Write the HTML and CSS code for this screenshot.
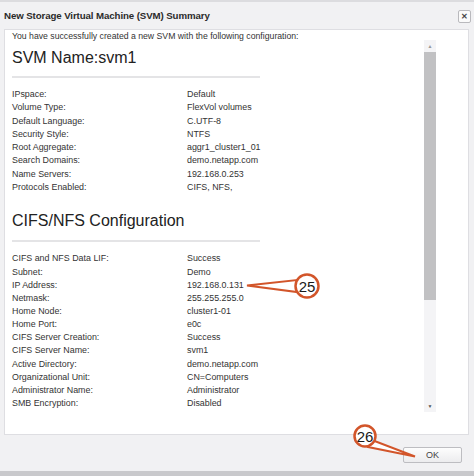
FILE: index.html
```html
<!DOCTYPE html>
<html>
<head>
<meta charset="utf-8">
<link rel="stylesheet" href="styles.css">
</head>
<body>
<div class="dialog">
  <div class="titlebar">
    <span class="title">New Storage Virtual Machine (SVM) Summary</span>
    <span class="close">&#x2715;</span>
  </div>
  <div class="panel">
    <div class="content">
      <p class="intro">You have successfully created a new SVM with the following configuration:</p>
      <h2 class="heading">SVM Name:svm1</h2>
      <div class="rows">
        <span>IPspace:</span><span>Default</span>
        <span>Volume Type:</span><span>FlexVol volumes</span>
        <span>Default Language:</span><span>C.UTF-8</span>
        <span>Security Style:</span><span>NTFS</span>
        <span>Root Aggregate:</span><span>aggr1_cluster1_01</span>
        <span>Search Domains:</span><span>demo.netapp.com</span>
        <span>Name Servers:</span><span>192.168.0.253</span>
        <span>Protocols Enabled:</span><span>CIFS, NFS,</span>
      </div>
      <h2 class="heading second">CIFS/NFS Configuration</h2>
      <div class="rows second-rows">
        <span>CIFS and NFS Data LIF:</span><span>Success</span>
        <span>Subnet:</span><span>Demo</span>
        <span>IP Address:</span><span>192.168.0.131</span>
        <span>Netmask:</span><span>255.255.255.0</span>
        <span>Home Node:</span><span>cluster1-01</span>
        <span>Home Port:</span><span>e0c</span>
        <span>CIFS Server Creation:</span><span>Success</span>
        <span>CIFS Server Name:</span><span>svm1</span>
        <span>Active Directory:</span><span>demo.netapp.com</span>
        <span>Organizational Unit:</span><span>CN=Computers</span>
        <span>Administrator Name:</span><span>Administrator</span>
        <span>SMB Encryption:</span><span>Disabled</span>
      </div>
    </div>
    <div class="scrollbar">
      <div class="arrow up">&#x25B2;</div>
      <div class="thumb"></div>
      <div class="track"></div>
      <div class="arrow down">&#x25BC;</div>
    </div>
  </div>
  <div class="footer">
    <button class="ok">OK</button>
  </div>
  <div class="bottomband"></div>
  <svg class="callouts" width="474" height="476" viewBox="0 0 474 476">
    <polygon points="247,285.5 297,280 297,292" fill="#fff" stroke="#d2552a" stroke-width="2" stroke-linejoin="miter"/>
    <circle cx="307" cy="286" r="11.5" fill="#fff" stroke="#d2552a" stroke-width="2.5"/>
    <text x="307" y="291.5" text-anchor="middle" class="calltext">25</text>
    <polygon points="415,456.5 372,440 368,447" fill="#fff" stroke="#d2552a" stroke-width="2" stroke-linejoin="miter"/>
    <circle cx="365" cy="436" r="10.5" fill="#fff" stroke="#d2552a" stroke-width="2.5"/>
    <text x="365" y="441.5" text-anchor="middle" class="calltext">26</text>
  </svg>
</div>
</body>
</html>
```
FILE: styles.css
```css
html, body {
  margin: 0;
  padding: 0;
}
body {
  width: 474px;
  height: 476px;
  overflow: hidden;
  background: #f1f1f3;
  font-family: "Liberation Sans", Arial, sans-serif;
  color: #333;
}
.dialog {
  position: relative;
  width: 474px;
  height: 476px;
  display: flex;
  flex-direction: column;
  border-top: 2px solid #dcdcdf;
  box-sizing: border-box;
}
.titlebar {
  height: 27px;
  display: flex;
  align-items: center;
  justify-content: space-between;
  padding: 0 3px 0 4px;
}
.title {
  font-weight: bold;
  font-size: 9.7px;
  color: #2a2a2a;
  letter-spacing: -0.1px;
}
.close {
  width: 11px;
  height: 11px;
  border: 1px solid #b9b9bd;
  border-radius: 2px;
  background: #fafafa;
  font-size: 8px;
  font-weight: bold;
  line-height: 11px;
  text-align: center;
  color: #444;
  margin-top: 1px;
}
.panel {
  margin: 0 5px 0 4px;
  height: 406px;
  background: #fff;
  border: 1px solid #dedee2;
  box-sizing: border-box;
  display: flex;
  overflow: hidden;
}
.content {
  flex: 1;
  padding-left: 7px;
}
.intro {
  margin: 0;
  font-size: 8.7px;
  line-height: 12px;
  color: #333;
}
.heading {
  margin: 6px 0 0 0;
  width: 248px;
  font-weight: normal;
  font-size: 16px;
  line-height: 20px;
  color: #222;
  padding-bottom: 8px;
  border-bottom: 2px solid #e4e4e6;
}
.heading.second {
  margin-top: 17px;
  padding-bottom: 9px;
}
.rows {
  margin-top: 10px;
  display: grid;
  grid-template-columns: 175px auto;
  font-size: 8.9px;
  line-height: 13.3px;
  color: #333;
}
.second-rows {
  margin-top: 10px;
  line-height: 13.15px;
}
.scrollbar {
  width: 12px;
  margin: 10px 32px 22px 0;
  display: flex;
  flex-direction: column;
  background: #f4f4f6;
}
.arrow {
  height: 12px;
  font-size: 5px;
  line-height: 12px;
  text-align: center;
  color: #555;
}
.arrow.up {
  color: #999;
}
.thumb {
  height: 248px;
  background: #c1c1c3;
}
.track {
  flex: 1;
}
.footer {
  flex: 1;
  display: flex;
  justify-content: flex-end;
  align-items: flex-start;
  padding: 12px 12px 0 0;
}
.ok {
  width: 59px;
  height: 16px;
  padding: 0;
  border: 1px solid #bdbdc1;
  border-radius: 2px;
  background: linear-gradient(#fdfdfd, #ececee);
  font-family: "Liberation Sans", Arial, sans-serif;
  font-size: 9px;
  color: #444;
}
.bottomband {
  height: 5px;
  background: #c9c9cc;
}
.callouts {
  position: absolute;
  left: 0;
  top: -2px;
}
.calltext {
  font-family: "Liberation Sans", Arial, sans-serif;
  font-size: 15px;
  fill: #1a1a1a;
}
```
